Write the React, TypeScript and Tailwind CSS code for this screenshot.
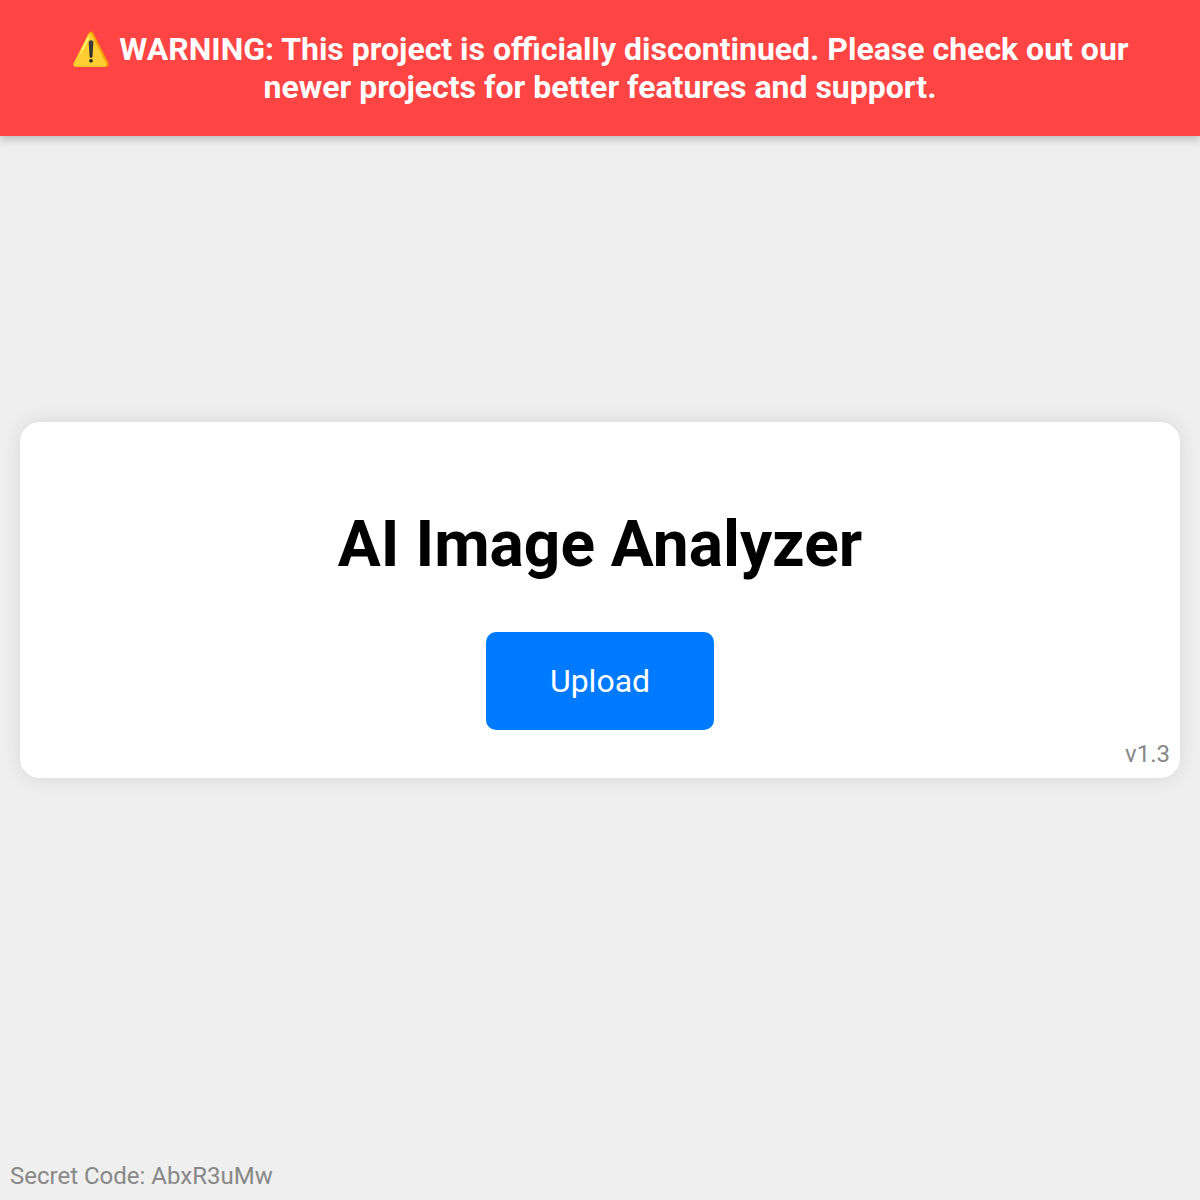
export default function App() {
  return (
    <div className="grid min-h-screen grid-rows-[1fr_auto_1fr] bg-[#efefef] font-[Roboto,sans-serif] text-black">
      <header
        role="alert"
        className="self-start bg-[#ff4444] px-[30px] py-[30px] text-center text-[32px] leading-[38px] font-bold text-white shadow-[0_4px_8px_rgba(0,0,0,0.2)]"
      >
        ⚠️ WARNING: This project is officially discontinued. Please check out our newer projects for better features and support.
      </header>

      <main className="relative mx-5 flex flex-col items-center rounded-[20px] bg-white px-5 pt-[85px] pb-12 text-center shadow-[0_0_20px_rgba(0,0,0,0.1)]">
        <h1 className="mb-[49px] text-[64px] leading-[76px] font-bold">AI Image Analyzer</h1>
        <button
          type="button"
          className="rounded-[10px] bg-[#007bff] px-16 py-[30px] text-[32px] leading-[38px] text-white"
        >
          Upload
        </button>
        <span className="absolute right-[10px] bottom-[10px] text-[24px] leading-7 text-[#888888]">v1.3</span>
      </main>

      <footer className="self-end p-[10px] text-[24px] leading-7 text-[#888888]">Secret Code: AbxR3uMw</footer>
    </div>
  );
}
